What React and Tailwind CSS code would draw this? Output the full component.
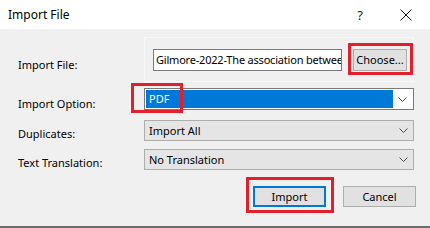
const font = { fontFamily: '"Segoe UI", "Noto Sans", "Open Sans", sans-serif' }

function Chevron() {
  return (
    <svg width="9" height="5" viewBox="0 0 9 5" className="shrink-0">
      <path d="M0.5 0.5 L4.5 4.5 L8.5 0.5" fill="none" stroke="#4a4a4a" strokeWidth="1" />
    </svg>
  )
}

function Combo({ value, highlight }) {
  if (highlight) {
    return (
      <div className="flex h-[22px] w-[270px] items-stretch border border-[#7a7a7a] bg-white p-px">
        <div className="flex flex-1 items-center bg-[#0078d7] pl-[3px] text-white">{value}</div>
        <div className="flex w-[19px] items-center justify-center">
          <Chevron />
        </div>
      </div>
    )
  }
  return (
    <div className="flex h-[21px] w-[270px] items-center border border-[#adadad] bg-[#e5e5e5] pl-[4px] pr-[5px]">
      <span className="flex-1 text-black">{value}</span>
      <Chevron />
    </div>
  )
}

function App() {
  return (
    <div className="flex h-[228px] w-[430px] flex-col overflow-hidden bg-[#f0f0f0] text-[11px] leading-[16px] text-black" style={font}>
      {/* title bar */}
      <div className="flex h-[29px] shrink-0 items-center bg-white pl-[8px]">
        <span className="flex-1 text-[12px]">Import File</span>
        <span className="mr-[37px] text-[13px] text-[#222]">?</span>
        <svg width="12" height="12" viewBox="0 0 12 12" className="mr-[18px]">
          <path d="M0.5 0.5 L11.5 11.5 M11.5 0.5 L0.5 11.5" stroke="#111" strokeWidth="1" />
        </svg>
      </div>

      <div className="flex flex-1 flex-col pl-[18px]">
        {/* import file row */}
        <div className="mt-[8px] flex h-[45px]">
          <div className="h-[45px] w-[126px] pt-[20px]">Import File:</div>
          <div className="flex h-[45px] w-[270px] items-center gap-[11px] border border-[#f8f8f8] pl-[8px]">
            <div className="flex h-[22px] w-[189px] items-center overflow-hidden whitespace-nowrap border border-[#7a7a7a] bg-white pl-[2px] tracking-[-0.2px]">
              Gilmore-2022-The association between
            </div>
            <div className="relative">
              <button className="h-[22px] w-[54px] whitespace-nowrap border border-[#adadad] bg-[#e1e1e1] pt-px">Choose...</button>
              <div className="pointer-events-none absolute -bottom-[4px] -left-[5px] -right-[6px] -top-[6px] border-[3px] border-[#e0202a]" />
            </div>
          </div>
        </div>

        {/* import option */}
        <div className="mt-[6px] flex h-[22px]">
          <div className="h-[22px] w-[126px] pt-[8px]">Import Option:</div>
          <div className="relative">
            <Combo value="PDF" highlight />
            <div className="pointer-events-none absolute left-[-13px] top-[-5px] h-[30px] w-[52px] border-[3px] border-[#e0202a]" />
          </div>
        </div>

        {/* duplicates */}
        <div className="mt-[10px] flex h-[21px]">
          <div className="h-[21px] w-[126px] pt-[6px]">Duplicates:</div>
          <Combo value="Import All" />
        </div>

        {/* text translation */}
        <div className="mt-[8px] flex h-[21px]">
          <div className="h-[21px] w-[126px] pt-[6px]">Text Translation:</div>
          <Combo value="No Translation" />
        </div>

        {/* buttons */}
        <div className="mt-[16px] flex justify-end gap-[17px] pr-[14px]">
          <div className="relative">
            <button className="h-[21px] w-[73px] border-2 border-[#0078d7] bg-[#e1e1e1]">Import</button>
            <div className="pointer-events-none absolute -bottom-[6px] -left-[7px] -right-[8px] -top-[9px] border-[3px] border-[#e0202a]" />
          </div>
          <button className="h-[21px] w-[73px] border border-[#adadad] bg-[#e1e1e1]">Cancel</button>
        </div>
      </div>

      <div className="h-[2px] shrink-0 bg-[#6d6d6d]" />
    </div>
  )
}

export default App
